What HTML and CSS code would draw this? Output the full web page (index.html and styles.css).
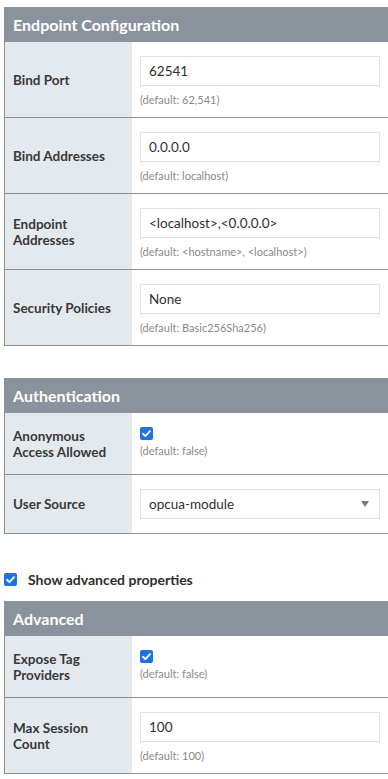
FILE: index.html
```html
<!DOCTYPE html>
<html>
<head>
<meta charset="utf-8">
<link rel="stylesheet" href="styles.css">
</head>
<body>
<div class="page">
  <section class="panel">
    <div class="panel-head">Endpoint Configuration</div>
    <div class="row">
      <div class="label">Bind Port</div>
      <div class="value">
        <div class="input">62541</div>
        <div class="hint">(default: 62,541)</div>
      </div>
    </div>
    <div class="row">
      <div class="label">Bind Addresses</div>
      <div class="value">
        <div class="input">0.0.0.0</div>
        <div class="hint">(default: localhost)</div>
      </div>
    </div>
    <div class="row">
      <div class="label">Endpoint<br>Addresses</div>
      <div class="value">
        <div class="input">&lt;localhost&gt;,&lt;0.0.0.0&gt;</div>
        <div class="hint">(default: &lt;hostname&gt;, &lt;localhost&gt;)</div>
      </div>
    </div>
    <div class="row">
      <div class="label">Security Policies</div>
      <div class="value">
        <div class="input">None</div>
        <div class="hint">(default: Basic256Sha256)</div>
      </div>
    </div>
  </section>

  <section class="panel panel-auth">
    <div class="panel-head">Authentication</div>
    <div class="row">
      <div class="label">Anonymous<br>Access Allowed</div>
      <div class="value value-check">
        <span class="check"><svg viewBox="0 0 13 13" width="13" height="13"><path d="M3 6.8 L5.4 9.1 L10 4.2" fill="none" stroke="#fff" stroke-width="1.9" stroke-linecap="round" stroke-linejoin="round"/></svg></span>
        <div class="hint hint-check">(default: false)</div>
      </div>
    </div>
    <div class="row">
      <div class="label">User Source</div>
      <div class="value value-select">
        <div class="input select"><span>opcua-module</span><span class="caret"></span></div>
      </div>
    </div>
  </section>

  <div class="advanced-toggle">
    <span class="check"><svg viewBox="0 0 13 13" width="13" height="13"><path d="M3 6.8 L5.4 9.1 L10 4.2" fill="none" stroke="#fff" stroke-width="1.9" stroke-linecap="round" stroke-linejoin="round"/></svg></span>
    <span class="toggle-text">Show advanced properties</span>
  </div>

  <section class="panel">
    <div class="panel-head">Advanced</div>
    <div class="row">
      <div class="label">Expose Tag<br>Providers</div>
      <div class="value value-check">
        <span class="check"><svg viewBox="0 0 13 13" width="13" height="13"><path d="M3 6.8 L5.4 9.1 L10 4.2" fill="none" stroke="#fff" stroke-width="1.9" stroke-linecap="round" stroke-linejoin="round"/></svg></span>
        <div class="hint hint-check">(default: false)</div>
      </div>
    </div>
    <div class="row">
      <div class="label">Max Session<br>Count</div>
      <div class="value">
        <div class="input">100</div>
        <div class="hint">(default: 100)</div>
      </div>
    </div>
  </section>
</div>
</body>
</html>
```
FILE: styles.css
```css
html, body {
  margin: 0;
  padding: 0;
  background: #ffffff;
}
body {
  font-family: Lato, "Liberation Sans", sans-serif;
  color: #333333;
  overflow: hidden;
}
.page {
  padding: 7px 0 0 4px;
  width: 384px;
}
.panel {
  display: flex;
  flex-direction: column;
}
.panel-auth {
  margin-top: 32px;
}
.panel-head {
  height: 35px;
  background: #8a939c;
  color: #ffffff;
  font-weight: 700;
  font-size: 16px;
  display: flex;
  align-items: center;
  padding-left: 9px;
}
.row {
  display: grid;
  grid-template-columns: 127px 1fr;
  border-left: 1px solid #8f8f8f;
  border-bottom: 1px solid #8f8f8f;
}
.label {
  background: #e4e9ee;
  display: flex;
  align-items: center;
  padding-left: 8px;
  font-weight: 700;
  font-size: 13.5px;
  line-height: 16px;
  color: #383838;
}
.value {
  padding: 14px 8px 9px 8px;
  display: flex;
  flex-direction: column;
}
.input {
  height: 30px;
  box-sizing: border-box;
  border: 1px solid #e2e2e2;
  background: #ffffff;
  padding-left: 8px;
  display: flex;
  align-items: center;
  font-size: 13.5px;
  color: #2f2f2f;
}
.hint {
  margin-top: 5px;
  font-size: 11px;
  line-height: 17px;
  color: #8a8a8a;
}
.value-check {
  padding-top: 14px;
  padding-bottom: 15px;
}
.hint-check {
  margin-top: 2px;
}
.value-select {
  padding-bottom: 14px;
}
.select {
  justify-content: space-between;
  padding-right: 10px;
}
.caret {
  width: 0;
  height: 0;
  border-left: 4px solid transparent;
  border-right: 4px solid transparent;
  border-top: 6px solid #7a7a7a;
}
.check {
  width: 13px;
  height: 13px;
  border-radius: 2px;
  background: #1a73e8;
  display: flex;
}
.advanced-toggle {
  display: flex;
  align-items: center;
  gap: 11px;
  margin-top: 37px;
  margin-bottom: 13px;
  height: 17px;
}
.toggle-text {
  font-weight: 700;
  font-size: 14px;
  color: #2e2e2e;
}
```
